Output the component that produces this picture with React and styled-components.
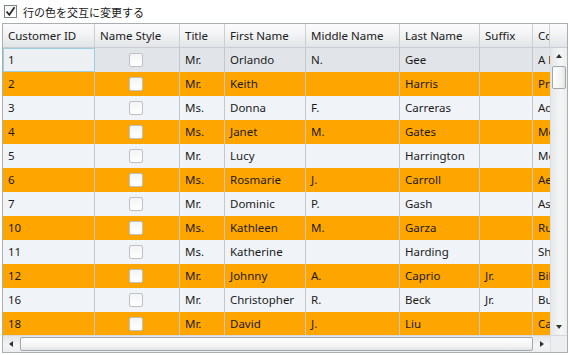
import React from 'react';
import styled, { createGlobalStyle } from 'styled-components';

const GlobalStyle = createGlobalStyle`
  html, body {
    margin: 0;
    padding: 0;
    background: #ffffff;
  }
  body {
    font-family: "Noto Sans", "Noto Sans CJK JP", sans-serif;
    font-size: 11.5px;
    color: #1b1b1b;
  }
`;

// column widths include the 1px right grid line
const columns = [
  { key: 'id', title: 'Customer ID', width: 92 },
  { key: 'style', title: 'Name Style', width: 85 },
  { key: 'title', title: 'Title', width: 45 },
  { key: 'first', title: 'First Name', width: 81 },
  { key: 'middle', title: 'Middle Name', width: 94 },
  { key: 'last', title: 'Last Name', width: 80 },
  { key: 'suffix', title: 'Suffix', width: 53 },
  { key: 'company', title: 'Company Name', width: 180 },
];

const template = columns.map((c) => c.width + 'px').join(' ');

const customers = [
  ['1', 'Mr.', 'Orlando', 'N.', 'Gee', '', 'A Bike Store'],
  ['2', 'Mr.', 'Keith', '', 'Harris', '', 'Progressive Sports'],
  ['3', 'Ms.', 'Donna', 'F.', 'Carreras', '', 'Advanced Bike Components'],
  ['4', 'Ms.', 'Janet', 'M.', 'Gates', '', 'Modular Cycle Systems'],
  ['5', 'Mr.', 'Lucy', '', 'Harrington', '', 'Metropolitan Sports Supply'],
  ['6', 'Ms.', 'Rosmarie', 'J.', 'Carroll', '', 'Aerobic Exercise Company'],
  ['7', 'Mr.', 'Dominic', 'P.', 'Gash', '', 'Associated Bikes'],
  ['10', 'Ms.', 'Kathleen', 'M.', 'Garza', '', 'Rural Cycle Emporium'],
  ['11', 'Ms.', 'Katherine', '', 'Harding', '', 'Sharp Bikes'],
  ['12', 'Mr.', 'Johnny', 'A.', 'Caprio', 'Jr.', 'Bikes and Motorbikes'],
  ['16', 'Mr.', 'Christopher', 'R.', 'Beck', 'Jr.', 'Bulk Discount Store'],
  ['18', 'Mr.', 'David', 'J.', 'Liu', '', 'Catalog Store'],
];

function App() {
  return (
    <>
      <GlobalStyle />
      <Page>
        <Toolbar>
          <CheckBox>
            <svg width="11" height="11" viewBox="0 0 11 11">
              <path d="M1.5 5.5 L4.3 8.8 L9.5 1.2" fill="none" stroke="#262626" strokeWidth="1.7" />
            </svg>
          </CheckBox>
          <ToolbarLabel>行の色を交互に変更する</ToolbarLabel>
        </Toolbar>

        <GridFrame>
          <Header>
            {columns.map((c) => (
              <HeaderCell key={c.key} style={{ width: c.width }}>
                {c.title}
              </HeaderCell>
            ))}
          </Header>
          <HeaderFiller />

          <Body>
            {customers.map((row, i) => (
              <Row key={row[0]} $alt={i % 2 === 1} $current={i === 0}>
                <Cell $focused={i === 0}>{row[0]}</Cell>
                <Cell $center>
                  <CellCheck />
                </Cell>
                {row.slice(1).map((v, j) => (
                  <Cell key={j}>{v}</Cell>
                ))}
              </Row>
            ))}
          </Body>

          <VScroll>
            <ArrowButton>
              <Arrow $dir="up" />
            </ArrowButton>
            <VThumb />
            <Spacer />
            <ArrowButton>
              <Arrow $dir="down" />
            </ArrowButton>
          </VScroll>

          <HScroll>
            <ArrowButton>
              <Arrow $dir="left" />
            </ArrowButton>
            <HThumb />
            <ArrowButton>
              <Arrow $dir="right" />
            </ArrowButton>
          </HScroll>

          <Corner />
        </GridFrame>
      </Page>
    </>
  );
}

export default App;

const Page = styled.div`
  width: 569px;
  height: 355px;
  padding: 0 2px;
  box-sizing: border-box;
`;

const Toolbar = styled.div`
  height: 23px;
  display: flex;
  align-items: center;
  padding-left: 2px;
  gap: 6px;
`;

const CheckBox = styled.div`
  width: 13px;
  height: 13px;
  box-sizing: border-box;
  border: 1px solid #7e8488;
  background: linear-gradient(#f4f4f4, #ffffff);
  display: flex;
  align-items: center;
  justify-content: center;
`;

const ToolbarLabel = styled.span`
  font-family: "Noto Sans CJK JP", sans-serif;
  font-size: 11px;
  color: #222;
`;

const GridFrame = styled.div`
  width: 566px;
  height: 330px;
  box-sizing: border-box;
  border: 1px solid #a9aeb3;
  display: grid;
  grid-template-columns: 1fr 17px;
  grid-template-rows: 24px 1fr 17px;
  overflow: hidden;
`;

const headerBg = 'linear-gradient(#fbfbfc 0%, #f2f3f4 45%, #e2e5e8 100%)';

const Header = styled.div`
  display: flex;
  overflow: hidden;
  background: ${headerBg};
  border-bottom: 1px solid #c9cdd1;
  border-right: 1px solid #cbced2;
`;

const HeaderFiller = styled.div`
  background: ${headerBg};
  border-bottom: 1px solid #c9cdd1;
`;

const HeaderCell = styled.div`
  flex: none;
  box-sizing: border-box;
  border-right: 1px solid #cbced2;
  padding-left: 5px;
  line-height: 23px;
  white-space: nowrap;
  overflow: hidden;
  color: #202020;
`;

const Body = styled.div`
  overflow: hidden;
`;

const Row = styled.div`
  display: grid;
  grid-template-columns: ${template};
  height: 24px;
  background: ${(p) => (p.$current ? '#e1e5e9' : p.$alt ? '#ffa500' : '#f0f3f8')};
`;

const Cell = styled.div`
  box-sizing: border-box;
  border-right: 1px solid #c5c8cb;
  padding-left: ${(p) => (p.$focused ? '4px' : '5px')};
  line-height: 24px;
  white-space: nowrap;
  overflow: hidden;
  display: flex;
  align-items: center;
  justify-content: ${(p) => (p.$center ? 'center' : 'flex-start')};
  ${(p) =>
    p.$focused &&
    `
    border: 1px solid #9fcfdc;
    background: #edf0f3;
  `}
`;

const CellCheck = styled.div`
  width: 14px;
  height: 14px;
  box-sizing: border-box;
  border: 1px solid #bdc1c5;
  border-radius: 2px;
  background: linear-gradient(#f3f4f5, #ffffff);
  margin-left: -8px;
`;

const VScroll = styled.div`
  display: flex;
  flex-direction: column;
  background: linear-gradient(90deg, #e5e7ea, #f4f5f6 60%, #eceef0);
  border-left: 1px solid #dcdfe2;
`;

const HScroll = styled.div`
  display: flex;
  background: linear-gradient(#e4e6e9, #f4f5f6 60%, #eceef0);
  border-top: 1px solid #d6d9dc;
`;

const Corner = styled.div`
  background: #eceef0;
  border-top: 1px solid #d6d9dc;
  border-left: 1px solid #dcdfe2;
`;

const ArrowButton = styled.div`
  flex: none;
  width: 16px;
  height: 16px;
  display: flex;
  align-items: center;
  justify-content: center;
`;

const Arrow = styled.div`
  width: 0;
  height: 0;
  border: 3.5px solid transparent;
  ${(p) => p.$dir === 'up' && 'border-bottom: 4px solid #333; border-top-width: 0;'}
  ${(p) => p.$dir === 'down' && 'border-top: 4px solid #333; border-bottom-width: 0;'}
  ${(p) => p.$dir === 'left' && 'border-right: 4px solid #333; border-left-width: 0;'}
  ${(p) => p.$dir === 'right' && 'border-left: 4px solid #333; border-right-width: 0;'}
`;

const VThumb = styled.div`
  height: 21px;
  margin: 2px 1px 0 1px;
  border: 1px solid #a2a7ac;
  border-radius: 2px;
  background: linear-gradient(90deg, #ffffff, #f1f2f3 70%, #e1e3e5);
`;

const HThumb = styled.div`
  flex: 1;
  margin: 1px 1px 1px 1px;
  border: 1px solid #a2a7ac;
  border-radius: 2px;
  background: linear-gradient(#ffffff, #f1f2f3 70%, #e1e3e5);
`;

const Spacer = styled.div`
  flex: 1;
`;
